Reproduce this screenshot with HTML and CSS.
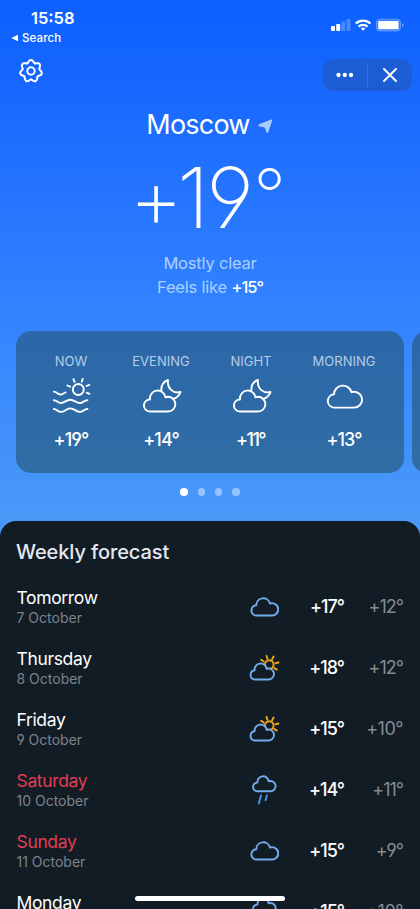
FILE: index.html
```html
<!DOCTYPE html>
<html lang="en">
<head>
<meta charset="utf-8">
<meta name="viewport" content="width=device-width">
<title>Weather</title>
<link rel="stylesheet" href="styles.css">
</head>
<body>
<svg class="defs" width="0" height="0">
  <symbol id="cloud" viewBox="0 0 37 26"><path d="M7.500 24.600H28.100a7.900 7.900 0 0 0 0-15.900q-1.400 0-2.600.5A8.900 8.900 0 0 0 8 11.300A6.700 6.700 0 0 0 7.500 24.600Z"/></symbol>
  <symbol id="moon" viewBox="0 0 39 34">
    <path d="M18.300 12C18 6.800 20.300 2.600 25 1C24 9.500 30 14.800 37.500 13C36.200 16.800 34.300 18.300 31.300 19.500"/>
    <path d="M6.800 32.500H25a7.300 7.300 0 0 0 0-14.700q-1.500 0-2.500.5A7.800 7.800 0 0 0 7 20.500A6 6 0 0 0 6.800 32.500Z"/>
  </symbol>
  <symbol id="haze" viewBox="0 0 38 36">
    <circle cx="25.300" cy="11.500" r="5.500"/>
    <path d="M20.500 1.200l1 2.600M29.700.9l-.9 2.800M36.300 6.800l-2.800 1.200M36.400 15.900l-2.700-1.200M14.300 7.500l2.800 1.200"/>
    <path d="M.9 13.600C4 13.600 4.200 16.500 7.500 16.500C9.800 16.500 10.500 15 12.700 14.400"/>
    <path d="M.9 22.200C4 22.200 4.500 25 8 25C11.800 25 13.200 21.700 17.300 21.700C21.300 21.700 23 25 27 25C30.300 25 30.800 22.200 34.400 22.200"/>
    <path d="M.9 31C4 31 4.500 33.900 8 33.900C11.800 33.900 13.200 30.400 17.300 30.400C21.300 30.400 23 33.900 27 33.900C30.300 33.900 30.800 31 34.400 31"/>
  </symbol>
  <symbol id="suncloud" viewBox="0 0 31 26">
    <g class="sun"><circle cx="20.300" cy="9.500" r="4.300"/><path d="M17.600.9l.8 2.900M24.600 1.500l-1.500 2.700M29.500 7.500l-3 .7M27.800 14.600l-2.400-1.500M12.200 4.800l2.500 1.700"/></g>
    <path class="front" d="M5.500 24.500H19.500a5.500 5.500 0 0 0 0-11q-1.200 0-1.900.4A6 6 0 0 0 5.600 15.300A4.650 4.650 0 0 0 5.500 24.500Z"/>
  </symbol>
  <symbol id="rain" viewBox="0 0 25 30">
    <path d="M5.200 16.200H18.500a5.100 5.100 0 0 0 0-10.200q-1.100 0-1.800.3A5.600 5.600 0 0 0 5.500 7.600A4.300 4.300 0 0 0 5.200 16.200Z"/>
    <path class="drops" d="M9 20.500L6.800 28.500M14.900 20.500L13.600 25.200"/>
  </symbol>
</svg>
<div class="screen">
  <header class="status">
    <div class="status-left">
      <div class="time">15:58</div>
      <div class="back"><svg width="8" height="8" viewBox="0 0 8 8"><path d="M.3 4L7 .7v6.600z" fill="#fff"/></svg><span>Search</span></div>
    </div>
    <svg class="indicators" width="73" height="14" viewBox="0 0 73 14">
      <g fill="#fff"><rect y="8" width="4" height="5" rx="1"/><rect x="5.200" y="6" width="4" height="7" rx="1"/><g opacity=".25"><rect x="10.300" y="3.500" width="4" height="9.500" rx="1"/><rect x="15.500" y="1" width="4" height="12" rx="1"/></g></g>
      <g fill="none" stroke="#fff" stroke-width="2.200"><path d="M24.800 5.500a10.600 10.600 0 0 1 14.600 0M27.700 8.600a6.400 6.400 0 0 1 8.800 0"/><path d="M29.900 10.500a3.500 3.500 0 0 1 4.400 0L32.100 12.800z" fill="#fff" stroke="none"/></g>
      <rect x="45.500" y="1.200" width="24" height="11.800" rx="3.400" fill="#fff" fill-opacity=".16" stroke="#fff" stroke-opacity=".3"/>
      <rect x="47.200" y="3" width="20.400" height="8.200" rx="1.200" fill="#fff"/><path d="M71 5.200q1.600.6 1.600 2t-1.600 2z" fill="#fff" opacity=".4"/>
    </svg>
  </header>
  <nav class="toolbar">
    <svg class="gear" width="26" height="26" viewBox="-13 -13 26 26" fill="none" stroke="#fff" stroke-width="2" stroke-linejoin="round" stroke-linecap="round"><circle r="3.700"/><path id="t" d="M-3.730 -7.750C-2.100 -8.500 -2.600 -11.100 0 -11.100C2.600 -11.100 2.100 -8.500 3.730 -7.750"/><use href="#t" transform="rotate(51.43)"/><use href="#t" transform="rotate(102.86)"/><use href="#t" transform="rotate(154.29)"/><use href="#t" transform="rotate(205.71)"/><use href="#t" transform="rotate(257.14)"/><use href="#t" transform="rotate(308.57)"/></svg>
    <div class="capsule">
      <div class="capsule-btn"><svg width="18" height="6" viewBox="0 0 18 6" fill="#fff"><circle cx="2.500" cy="3" r="2.150"/><circle cx="8.800" cy="3" r="2.150"/><circle cx="15" cy="3" r="2.150"/></svg></div>
      <div class="capsule-btn"><svg width="14" height="14" viewBox="0 0 14 14" stroke="#fff" stroke-width="1.900" stroke-linecap="round"><path d="M1 1l12 12M13 1L1 13"/></svg></div>
    </div>
  </nav>
  <section class="current">
    <h1 class="city"><span>Moscow</span><svg width="15" height="15" viewBox="0 0 15 15"><path d="M13.300.6Q14.500.3 14.200 1.500L10.300 13Q9.400 14.800 8.200 13L7.300 9.400Q7 8.500 6.100 8.300L1.400 7.500Q-.5 6.500 1.200 5.300Z" fill="#abcdff"/></svg></h1>
    <div class="temp"><span>+</span><span class="one">1</span><span class="nine">9</span><span class="ring">°</span></div>
    <div class="cond">Mostly clear</div>
    <div class="cond feels">Feels like <b>+15°</b></div>
  </section>
  <section class="hours">
    <div class="card">
      <div class="part"><span class="label">NOW</span><svg class="ic haze"><use href="#haze"/></svg><span class="deg">+19°</span></div>
      <div class="part"><span class="label">EVENING</span><svg class="ic moon"><use href="#moon"/></svg><span class="deg">+14°</span></div>
      <div class="part"><span class="label">NIGHT</span><svg class="ic moon"><use href="#moon"/></svg><span class="deg ones">+11°</span></div>
      <div class="part"><span class="label">MORNING</span><svg class="ic cloud"><use href="#cloud"/></svg><span class="deg">+13°</span></div>
    </div>
    <div class="card next"></div>
  </section>
  <div class="dots"><i class="on"></i><i></i><i></i><i></i></div>
  <section class="weekly">
    <h2>Weekly forecast</h2>
    <div class="day"><div><p class="name">Tomorrow</p><p class="date">7 October</p></div><svg class="wic cloud"><use href="#cloud"/></svg><span class="hi">+17°</span><span class="lo">+12°</span></div>
    <div class="day"><div><p class="name">Thursday</p><p class="date">8 October</p></div><svg class="wic suncloud"><use href="#suncloud"/></svg><span class="hi">+18°</span><span class="lo">+12°</span></div>
    <div class="day"><div><p class="name">Friday</p><p class="date">9 October</p></div><svg class="wic suncloud"><use href="#suncloud"/></svg><span class="hi">+15°</span><span class="lo wide">+10°</span></div>
    <div class="day"><div><p class="name red">Saturday</p><p class="date">10 October</p></div><svg class="wic rain"><use href="#rain"/></svg><span class="hi">+14°</span><span class="lo">+11°</span></div>
    <div class="day"><div><p class="name red">Sunday</p><p class="date">11 October</p></div><svg class="wic cloud"><use href="#cloud"/></svg><span class="hi">+15°</span><span class="lo">+9°</span></div>
    <div class="day"><div><p class="name">Monday</p></div><svg class="wic rain"><use href="#rain"/></svg><span class="hi">+15°</span><span class="lo wide">+10°</span></div>
  </section>
  <div class="home"></div>
</div>
</body>
</html>
```
FILE: styles.css
```css
* { box-sizing: border-box; margin: 0; padding: 0; }
body { font-family: Inter, "Liberation Sans", sans-serif; color: #fff; overflow: hidden; font-feature-settings: "cv04" 1; }
.defs { position: absolute; }
.screen { position: relative; width: 420px; height: 909px; overflow: hidden; display: flex; flex-direction: column; background: linear-gradient(#0c60ff 0, #1969ff 100px, #3584ff 325px, #4a99f8 521px); }
svg { display: block; }
.status { height: 58px; display: flex; justify-content: space-between; padding: 9px 16px 0 11px; flex: none; }
.time { font-size: 16.500px; line-height: 19px; font-weight: 600; margin-left: 20px; }
.back { display: flex; align-items: center; gap: 3px; font-size: 11.500px; line-height: 14px; margin-top: 3px; font-weight: 500; letter-spacing: .1px; }
.indicators { margin-top: 9px; }
.toolbar { height: 34px; display: flex; justify-content: space-between; padding: 1px 8px 0 17.500px; flex: none; }
.gear { margin-top: -1px; }
.capsule { width: 89px; height: 32px; border-radius: 10px; background: #1c5cd4; display: flex; align-items: center; }
.capsule-btn { width: 44px; height: 24px; display: flex; align-items: center; justify-content: center; }
.capsule-btn + .capsule-btn { border-left: 1px solid #3670dc; width: 45px; }
.current { height: 239px; flex: none; display: flex; flex-direction: column; align-items: center; padding-top: 16px; }
.city { font-size: 27px; font-weight: 400; line-height: 34px; display: flex; align-items: center; gap: 8px; letter-spacing: -.8px; padding-right: 1px; }
.city svg { margin-top: 3px; }
.temp { font-size: 84px; line-height: 84px; height: 108px; padding: 14px 5px 0 0; font-weight: 200; display: flex; }
.one { margin-left: -6px; }
.nine { margin-left: -3px; }
.ring { margin: -4px 0 0 -1px; font-size: 72px; }
.cond { font-size: 16.500px; line-height: 24px; color: #abd0ff; letter-spacing: -.2px; margin-top: 1px; }
.feels { margin-top: 0; letter-spacing: -.2px; }
.cond b { color: #fff; font-weight: 500; letter-spacing: -1px; }
.hours { height: 142px; flex: none; display: flex; gap: 8px; padding-left: 16px; }
.card { width: 388px; height: 142px; flex: none; border-radius: 15px; background: linear-gradient(#2c67a9, #306da4); display: grid; grid-template-columns: 110px 70px 110px 76px; }
.part { display: flex; flex-direction: column; align-items: center; padding-top: 19.500px; }
.label { font-size: 13px; line-height: 20px; color: #b4ceea; white-space: nowrap; }
.ic { height: 42px; margin-top: 4.500px; fill: none; stroke: #fff; stroke-width: 1.900; stroke-linecap: round; stroke-linejoin: round; }
.ic.haze { width: 38px; margin-left: 2px; }
.ic.moon { width: 39px; margin-left: 3px; }
.ic.cloud { width: 37px; }
.deg { font-size: 18px; line-height: 22px; font-weight: 500; margin-top: 12px; letter-spacing: -.9px; }
.deg.ones { letter-spacing: -1.600px; margin-right: 1px; }
.dots { display: flex; gap: 9.800px; justify-content: center; height: 48px; padding-top: 15px; flex: none; }
.dots i { width: 7.500px; height: 7.500px; border-radius: 50%; background: #94c3ff; }
.dots .on { background: #fff; }
.weekly { background: #121c25; border-radius: 16px 16px 0 0; height: 460px; padding: 14px 16px 0; flex: none; }
h2 { font-size: 20px; line-height: 34px; font-weight: 450; letter-spacing: -.1px; color: #e4e8ef; margin-bottom: 7px; }
.day { display: grid; grid-template-columns: 233px 31px 64px 60px; align-items: center; height: 61px; }
.day > div { padding: 1px 0 0 .5px; }
.name { font-size: 17.500px; line-height: 21px; white-space: nowrap; letter-spacing: -.350px; }
.day:last-child .name { margin-bottom: 20px; }
.red { color: #e33d52; }
.date { font-size: 14px; line-height: 20px; color: #7c838b; }
.wic { fill: none; stroke: #74abea; stroke-width: 1.900; stroke-linecap: round; stroke-linejoin: round; justify-self: center; }
.wic.cloud { width: 29px; height: 21px; stroke-width: 2.500; }
.wic.suncloud { width: 31px; height: 26px; }
.wic.rain { width: 25px; height: 30px; }
.sun { stroke: #f5a713; }
.front { fill: #121c25; }
.drops { stroke: #4797ef; }
.hi, .lo { text-align: right; font-size: 18px; font-weight: 500; letter-spacing: -1px; }
.lo { color: #858b92; font-weight: 400; padding-right: 1px; }
.lo.wide { letter-spacing: -.5px; }
.home { position: absolute; left: 135px; top: 896px; width: 150px; height: 5px; border-radius: 3px; background: #fff; }
```
